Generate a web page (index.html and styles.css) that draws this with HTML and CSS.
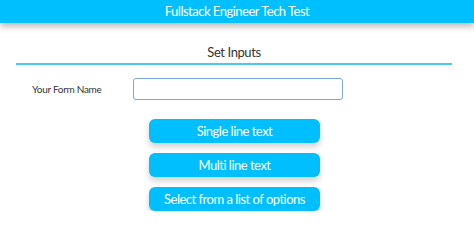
FILE: index.html
```html
<!DOCTYPE html>
<html lang="en">
<head>
    <meta charset="UTF-8">
    <title>Fullstack Engineer Tech Test</title>
    <link rel="stylesheet" href="styles.css">
</head>
<body>
    <header class="top-bar">Fullstack Engineer Tech Test</header>

    <div class="content">
        <h2 class="section-title">Set Inputs</h2>

        <div class="form-row">
            <label for="formName">Your Form Name</label>
            <input type="text" id="formName">
        </div>

        <div class="button-list">
            <button class="input-btn">Single line text</button>
            <button class="input-btn">Multi line text</button>
            <button class="input-btn">Select from a list of options</button>
        </div>
    </div>
</body>
</html>
```

FILE: styles.css
```css
body {
    margin: 0;
    font-family: Lato, 'Liberation Sans', sans-serif;
    background: #fff;
    color: #222;
}

.top-bar {
    background: #00bfff;
    color: #fff;
    height: 23px;
    line-height: 23px;
    text-align: center;
    font-size: 13px;
    letter-spacing: -0.5px;
    box-shadow: 0 4px 6px rgba(0,0,0,0.25);
}

.content {
    padding: 0 22px 0 16px;
}

.section-title {
    margin: 21px 0 0;
    font-size: 13px;
    letter-spacing: -0.4px;
    font-weight: normal;
    text-align: center;
    color: #333;
    line-height: 17px;
    padding-bottom: 2px;
    border-bottom: 2px solid #4cc6f2;
}

.form-row {
    display: flex;
    align-items: center;
    margin-top: 13px;
    padding-left: 16px;
}

.form-row label {
    width: 101px;
    font-size: 10px;
    letter-spacing: -0.3px;
    color: #333;
}

.form-row input {
    width: 210px;
    height: 22px;
    box-sizing: border-box;
    border: 1px solid #7aa6d8;
    border-radius: 3px;
    font-size: 12px;
}

.button-list {
    display: flex;
    flex-direction: column;
    align-items: flex-start;
    gap: 10px;
    margin-top: 19px;
    padding-left: 133px;
}

.input-btn {
    width: 171px;
    height: 24px;
    border: none;
    border-radius: 6px;
    background: #00bfff;
    color: #fff;
    font-family: inherit;
    font-size: 13px;
    letter-spacing: -0.5px;
    padding: 0;
    box-shadow: 0 4px 6px rgba(0,0,0,0.18);
    cursor: pointer;
}
```
